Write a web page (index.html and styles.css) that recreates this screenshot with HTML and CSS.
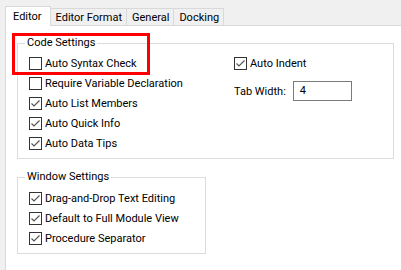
FILE: index.html
```html
<!DOCTYPE html>
<html>
<head>
    <title>Options</title>
    <link rel="stylesheet" href="styles.css">
</head>
<body>
    <div class="tabs">
        <div class="tab active">Editor</div>
        <div class="tab">Editor Format</div>
        <div class="tab">General</div>
        <div class="tab">Docking</div>
    </div>

    <div class="panel">
        <fieldset class="group code">
            <legend>Code Settings</legend>
            <div class="cols">
                <div class="col">
                    <label class="check"><span class="box"></span>Auto Syntax Check</label>
                    <label class="check"><span class="box"></span>Require Variable Declaration</label>
                    <label class="check"><span class="box on"><svg viewBox="0 0 11 11"><polyline points="1.5,5.5 4,8 9.5,2.5"/></svg></span>Auto List Members</label>
                    <label class="check"><span class="box on"><svg viewBox="0 0 11 11"><polyline points="1.5,5.5 4,8 9.5,2.5"/></svg></span>Auto Quick Info</label>
                    <label class="check"><span class="box on"><svg viewBox="0 0 11 11"><polyline points="1.5,5.5 4,8 9.5,2.5"/></svg></span>Auto Data Tips</label>
                </div>
                <div class="col side">
                    <label class="check"><span class="box on"><svg viewBox="0 0 11 11"><polyline points="1.5,5.5 4,8 9.5,2.5"/></svg></span>Auto Indent</label>
                    <div class="field">
                        <span>Tab Width:</span>
                        <div class="input">4</div>
                    </div>
                </div>
            </div>
        </fieldset>

        <fieldset class="group window">
            <legend>Window Settings</legend>
            <label class="check"><span class="box on"><svg viewBox="0 0 11 11"><polyline points="1.5,5.5 4,8 9.5,2.5"/></svg></span>Drag-and-Drop Text Editing</label>
            <label class="check"><span class="box on"><svg viewBox="0 0 11 11"><polyline points="1.5,5.5 4,8 9.5,2.5"/></svg></span>Default to Full Module View</label>
            <label class="check"><span class="box on"><svg viewBox="0 0 11 11"><polyline points="1.5,5.5 4,8 9.5,2.5"/></svg></span>Procedure Separator</label>
        </fieldset>

        <!-- annotation box -->
        <div class="highlight"></div>
    </div>
</body>
</html>
```

FILE: styles.css
```css
body { margin: 0; background: #f0f0f0; font-family: Roboto, "Liberation Sans", sans-serif; font-size: 11px; color: #000; height: 270px; overflow: hidden; }
.tabs { display: flex; align-items: flex-end; padding: 6px 0 0 5px; height: 19px; }
.tab { height: 16px; line-height: 17px; padding: 0 4px 0 5px; border: 1px solid #d9d9d9; border-bottom: none; margin-left: -1px; background: #f0f0f0; }
.tab:first-child { margin-left: 0; }
.tab.active { height: 19px; line-height: 20px; background: #fff; padding: 0 8px 0 7px; position: relative; z-index: 1; margin-bottom: -1px; }
.panel { position: relative; margin-left: 5px; background: #fff; border-top: 1px solid #d9d9d9; border-left: 1px solid #d9d9d9; height: 245px; padding: 10px 0 0 11px; box-sizing: border-box; }
.group { border: 1px solid #dcdcdc; margin: 0; padding: 0 0 0 11px; box-sizing: border-box; }
.group legend { padding: 0 2px; margin-left: -4px; line-height: 14px; }
.code { width: 377px; height: 123px; padding-top: 3px; }
.window { width: 189px; height: 84px; margin-top: 11px; padding-top: 4px; }
.cols { display: flex; }
.col { display: flex; flex-direction: column; width: 205px; }
.side { width: auto; }
.check { display: flex; align-items: center; height: 20px; }
.box { width: 11px; height: 11px; border: 1px solid #333; background: #fff; margin-right: 3px; display: flex; }
.box svg { width: 11px; height: 11px; fill: none; stroke: #555; stroke-width: 1.2; }
.field { display: flex; align-items: center; margin-top: 8px; }
.input { height: 18px; border: 1px solid #7a7a7a; margin-left: 7px; line-height: 18px; padding-left: 6px; box-sizing: content-box; width: 51px; }
.highlight { position: absolute; left: 6px; top: 7px; width: 132px; height: 36px; border: 3px solid #f00; }
```
